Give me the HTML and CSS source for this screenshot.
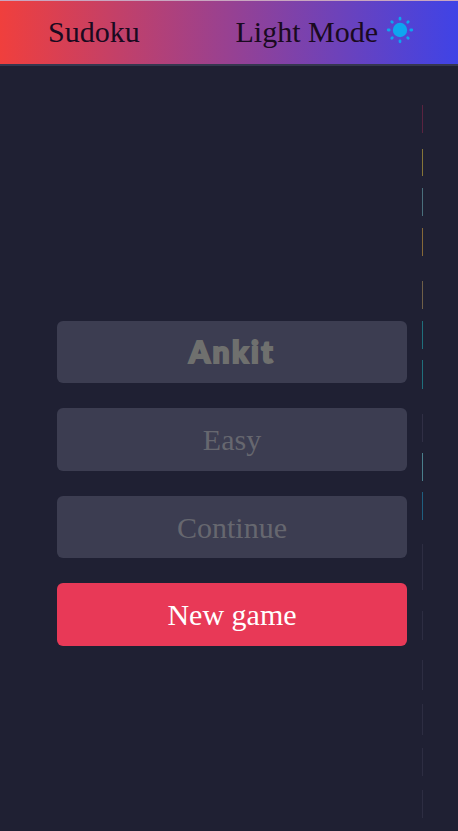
FILE: index.html
```html
<!DOCTYPE html>
<html lang="en">
<head>
<meta charset="utf-8">
<title>Sudoku</title>
<link rel="stylesheet" href="styles.css">
</head>
<body>
<header class="topbar">
  <div class="brand">Sudoku</div>
  <div class="mode">
    <span>Light Mode</span>
    <svg class="sun" viewBox="0 0 28 28" aria-hidden="true">
      <circle cx="14" cy="14" r="7.2" fill="#0ea5f0"/>
      <g stroke="#0ea5f0" stroke-width="2.8" stroke-linecap="round">
        <path d="M14 2.200v1M14 24.800v1M2.200 14h1M24.800 14h1M5.800 5.800l.5.500M21.700 21.700l.5.500M5.800 22.200l.5-.5M21.700 6.300l.5-.5"/>
      </g>
    </svg>
  </div>
</header>
<svg class="strip" viewBox="0 0 1 831" aria-hidden="true">
  <g stroke-width="1">
    <path d="M.5 105v28" stroke="#5a2340"/>
    <path d="M.5 149v27" stroke="#857538"/>
    <path d="M.5 188v28" stroke="#4a6f7c"/>
    <path d="M.5 228v28" stroke="#856838"/>
    <path d="M.5 281v28" stroke="#6f5f48"/>
    <path d="M.5 321v28" stroke="#1f6f7c"/>
    <path d="M.5 360v29" stroke="#1f6f7c"/>
    <path d="M.5 414v28" stroke="#302f45"/>
    <path d="M.5 453v28" stroke="#4a7f8c"/>
    <path d="M.5 492v28" stroke="#1f5f80"/>
    <path d="M.5 544v46" stroke="#2d2d42"/>
    <path d="M.5 611v29" stroke="#2d2d42"/>
    <path d="M.5 660v30" stroke="#2d2d42"/>
    <path d="M.5 704v31" stroke="#2d2d42"/>
    <path d="M.5 748v28" stroke="#2d2d42"/>
    <path d="M.5 790v28" stroke="#2d2d42"/>
  </g>
</svg>
<main class="menu">
  <div class="btn btn-muted btn-name">Ankit</div>
  <div class="btn btn-muted">Easy</div>
  <div class="btn btn-muted">Continue</div>
  <div class="btn btn-primary">New game</div>
</main>
</body>
</html>
```
FILE: styles.css
```css
* { box-sizing: border-box; }
html, body { height: 100%; }
body {
  margin: 0;
  position: relative;
  overflow: hidden;
  background: #1f2033;
  font-family: "Liberation Serif", "Times New Roman", serif;
}
.topbar {
  height: 66px;
  padding: 0 44px 1px 48px;
  display: flex;
  align-items: center;
  justify-content: space-between;
  background: linear-gradient(90deg, #f03f3d, #3f43e6);
  border-top: 1px solid #c9a6c0;
  border-bottom: 2px solid #35374f;
  font-size: 30px;
  color: #1a0a20;
}
.brand { line-height: 34px; }
.mode { display: flex; align-items: center; gap: 8px; }
.sun { width: 28px; height: 28px; margin-top: -5px; }
.strip {
  position: absolute;
  left: 422px;
  top: 0;
  width: 1px;
  height: 831px;
}
.menu {
  width: 350px;
  margin: 254.6px 0 0 57px;
  display: flex;
  flex-direction: column;
  gap: 25px;
}
.btn {
  height: 62.5px;
  padding-top: 1.5px;
  border-radius: 6px;
  display: flex;
  align-items: center;
  justify-content: center;
  font-size: 30px;
}
.btn-muted { background: #3c3d51; color: #66676f; }
.btn-name {
  padding-top: 0;
  padding-bottom: 2px;
  font-family: "Lato", sans-serif;
  font-weight: 900;
  font-size: 30px;
  color: #6f706e;
  -webkit-text-stroke: 2px #6f706e;
  letter-spacing: 2.5px;
}
.btn-primary { background: #e83957; color: #fff; }
```
